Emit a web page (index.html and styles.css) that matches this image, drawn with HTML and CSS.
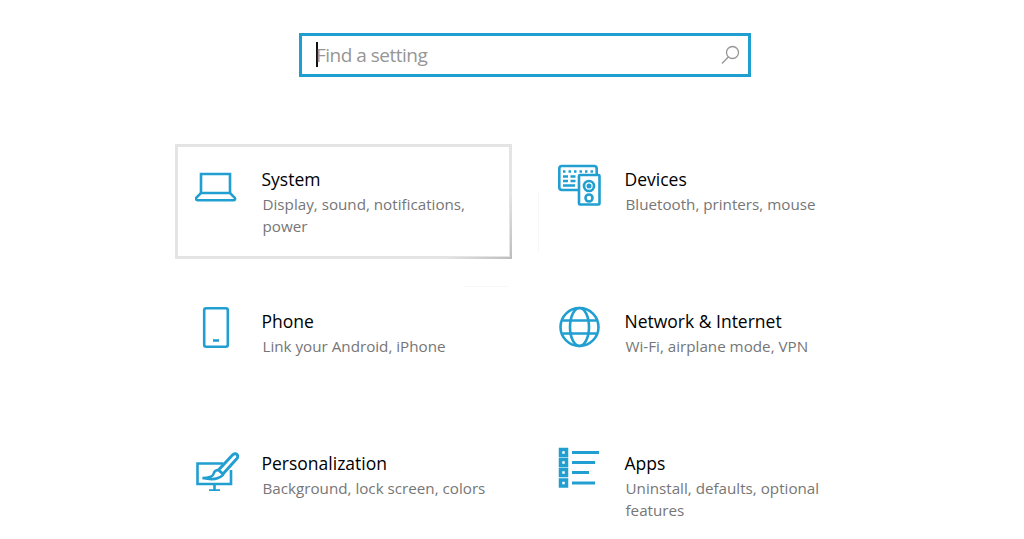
FILE: index.html
```html
<!DOCTYPE html>
<html>
<head>
    <title>Settings</title>
    <meta charset="UTF-8">
    <link rel="stylesheet" href="styles.css">
</head>
<body>
    <div class="search">
        <span class="caret"></span>
        <span class="placeholder">Find a setting</span>
        <svg class="search-icon" width="20" height="20" viewBox="0 0 20 20">
            <circle cx="12.500" cy="7.500" r="6"/>
            <path d="M8.300 12L2 18.500"/>
        </svg>
    </div>

    <div class="grid">
        <div class="card card-hover">
            <svg class="icon" width="44" height="44" viewBox="0 0 44 44">
                <path d="M6 30V11h29v19"/>
                <path d="M6 30h29l4.600 4.600c.9.9.4 2.600-1 2.600H2.400c-1.400 0-1.900-1.700-1-2.600z"/>
            </svg>
            <div class="text">
                <div class="title">System</div>
                <div class="desc">Display, sound, notifications, power</div>
            </div>
        </div>

        <div class="card card-left">
            <svg class="icon" width="44" height="44" viewBox="0 0 44 44">
                <path d="M20 27H4c-1.600 0-2.700-1.100-2.700-2.700V5.700C1.300 4.100 2.400 3 4 3h32c1.600 0 2.700 1.100 2.700 2.700V11"/>
                <rect x="21" y="12" width="20.500" height="29.500" rx="1"/>
                <circle cx="31" cy="23" r="5"/>
                <circle cx="31" cy="35" r="3.500"/>
                <path class="thin" d="M5 8.500h2.500M10.500 8.500h2.500M16 8.500h2.500M21.500 8.500h2.500M27 8.500h2.500M32.500 8.500h2.500M5 13.500h5M12.500 13.500h5M5 18h5M12.500 18h5M5 22.500h12"/>
                <circle class="dot" cx="31" cy="23" r="1.200"/>
            </svg>
            <div class="text">
                <div class="title">Devices</div>
                <div class="desc">Bluetooth, printers, mouse</div>
            </div>
        </div>

        <div class="card card-top">
            <svg class="icon" width="44" height="44" viewBox="0 0 44 44">
                <rect x="9.200" y="3.200" width="23.600" height="38.600" rx="2"/>
                <path d="M18 35.500h6"/>
            </svg>
            <div class="text">
                <div class="title">Phone</div>
                <div class="desc">Link your Android, iPhone</div>
            </div>
        </div>

        <div class="card">
            <svg class="icon" width="44" height="44" viewBox="0 0 44 44">
                <circle cx="21.500" cy="22" r="19"/>
                <ellipse cx="21.500" cy="22" rx="9.500" ry="19"/>
                <path d="M4.500 15.500h34M4.500 28.500h34"/>
            </svg>
            <div class="text">
                <div class="title">Network &amp; Internet</div>
                <div class="desc">Wi-Fi, airplane mode, VPN</div>
            </div>
        </div>

        <div class="card">
            <svg class="icon" width="44" height="44" viewBox="0 0 44 44">
                <path d="M28 16.500H2.500V37H36V23"/>
                <path d="M19.500 37v6M14 43.500h11"/>
                <path class="fat" d="M23.500 23l14-15c1.500-1.500 3.500-1.500 4.500-.5s1 3-.5 4.500L28 27z"/>
                <path d="M23.500 23c-3.500 0-4.500 2-5 4s-2 3.500-11 4c7 1.500 12 1.500 15.500 0 2.500-1 5-2.500 5-4"/>
            </svg>
            <div class="text">
                <div class="title">Personalization</div>
                <div class="desc">Background, lock screen, colors</div>
            </div>
        </div>

        <div class="card">
            <svg class="icon" width="44" height="44" viewBox="0 0 44 44">
                <g class="squares">
                    <rect x="2.500" y="2.500" width="6" height="6"/>
                    <rect x="2.500" y="12.500" width="6" height="6"/>
                    <rect x="2.500" y="22.500" width="6" height="6"/>
                    <rect x="2.500" y="33" width="6" height="6"/>
                </g>
                <path class="bold" d="M14 5.500h27M14 15.500h23M14 25.500h17M14 36h23"/>
            </svg>
            <div class="text">
                <div class="title">Apps</div>
                <div class="desc">Uninstall, defaults, optional features</div>
            </div>
        </div>
    </div>
</body>
</html>
```

FILE: styles.css
```css
html, body {
    height: 539px;
    overflow: hidden;
}
body {
    font-family: 'Open Sans', 'Noto Sans', sans-serif;
    background: #fff;
    color: #000;
    margin: 0;
}
.search {
    width: 452px;
    height: 44px;
    box-sizing: border-box;
    margin: 33px 0 0 299px;
    padding: 0 8px 1px 14px;
    border: 3px solid #1f9fd0;
    display: flex;
    align-items: center;
}
.caret {
    width: 2px;
    height: 25px;
    margin-right: -2px;
    background: #111;
}
.placeholder {
    flex: 1;
    font-size: 19px;
    letter-spacing: -0.5px;
    color: #969696;
}
.search-icon {
    fill: none;
    stroke: #969696;
    stroke-width: 1.300;
}
.grid {
    display: grid;
    grid-template-columns: 337px 337px;
    grid-auto-rows: 115px;
    column-gap: 26px;
    row-gap: 27px;
    margin: 67px 0 0 175px;
}
.card {
    position: relative;
    box-sizing: border-box;
    border: 3px solid transparent;
    padding: 16px 10px 0 17px;
    display: flex;
    gap: 22.500px;
}
.card-hover {
    border-color: #e4e4e4;
}
/* reveal highlight on the hovered card and its neighbours */
.card-hover::after {
    content: "";
    position: absolute;
    right: -3px;
    bottom: -3px;
    width: 80px;
    height: 60px;
    border-right: 2px solid #c4c4c4;
    border-bottom: 2px solid #c4c4c4;
    border-image: linear-gradient(135deg, transparent 55%, #bdbdbd) 1;
}
.card-left::before {
    content: "";
    position: absolute;
    left: -3px;
    top: 45px;
    width: 1px;
    height: 60px;
    background: #f7f7f7;
}
.card-top::before {
    content: "";
    position: absolute;
    left: 285px;
    top: -3px;
    width: 45px;
    height: 1px;
    background: #f7f7f7;
}
.icon {
    flex: none;
    fill: none;
    stroke: #219fd0;
    stroke-width: 2.600;
}
.icon .thin {
    stroke-width: 2.300;
}
.icon .bold,
.icon .fat {
    stroke-width: 3;
}
.icon .squares {
    stroke-width: 3.500;
}
.icon .dot {
    fill: #219fd0;
}
.text {
    margin-top: 3.500px;
}
.title {
    font-size: 17.500px;
    line-height: 24px;
    margin-bottom: 2px;
}
.desc {
    font-size: 15.200px;
    line-height: 22px;
    margin-left: 1px;
    color: #767676;
}
```
